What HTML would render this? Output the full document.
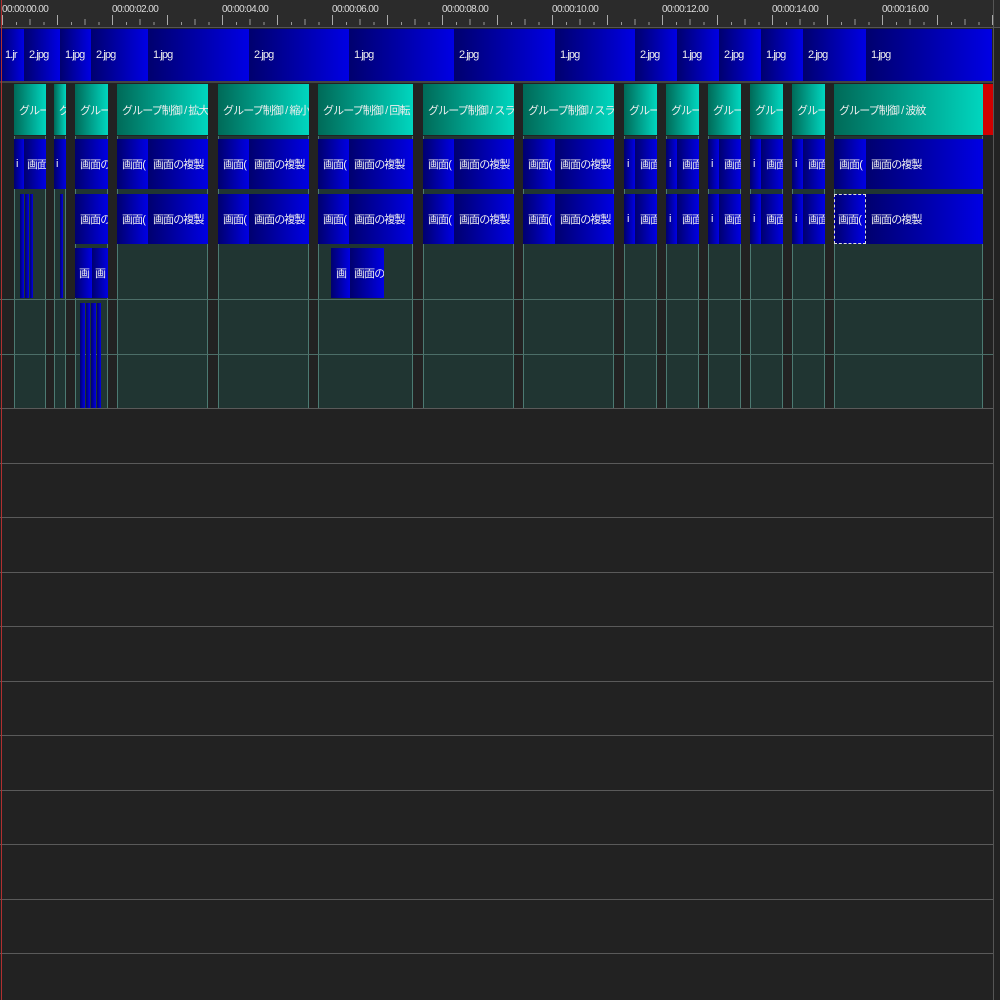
<!DOCTYPE html>
<html><head><meta charset="utf-8"><style>
*{margin:0;padding:0;box-sizing:border-box}
body{width:1000px;height:1000px;background:#222;position:relative;overflow:hidden;font-family:"Liberation Sans","Noto Sans CJK JP",sans-serif;color:#eee;font-size:11px}
div{position:absolute}
.ruler{left:0;top:0;width:1000px;height:28px;background:#2b2b2b;border-bottom:1px solid #555}
.lb{top:4px;font-size:10px;color:#ddd;letter-spacing:-0.6px}
.b{background:linear-gradient(90deg,#00006e,#0000e4);white-space:nowrap;overflow:hidden;display:flex;align-items:center;padding-left:5px;letter-spacing:-0.9px}
.g{top:84px;height:51px;background:linear-gradient(90deg,#006a58,#00d6bf);display:flex;align-items:center;padding-left:5px;overflow:hidden;white-space:nowrap;letter-spacing:-0.9px}
.t{top:136px;height:272px;background:#203532;border-left:1px solid #4c7a72;border-right:1px solid #4c7a72}
.hl{left:0;width:993px;height:1px;background:#5a5a5a}
.r3{top:139px;height:50px}
.r4{top:194px;height:50px}
.s{background:linear-gradient(90deg,#00006e,#0000e4)}
</style></head><body>
<div class="ruler">
<div class="lb" style="left:2px">00:00:00.00</div>
<div class="lb" style="left:112px">00:00:02.00</div>
<div class="lb" style="left:222px">00:00:04.00</div>
<div class="lb" style="left:332px">00:00:06.00</div>
<div class="lb" style="left:442px">00:00:08.00</div>
<div class="lb" style="left:552px">00:00:10.00</div>
<div class="lb" style="left:662px">00:00:12.00</div>
<div class="lb" style="left:772px">00:00:14.00</div>
<div class="lb" style="left:882px">00:00:16.00</div>
<div style="left:2px;top:22px;width:998px;height:3px;background:repeating-linear-gradient(90deg,#999 0 1px,transparent 1px 13.75px)"></div>
<div style="left:2px;top:19px;width:998px;height:6px;background:repeating-linear-gradient(90deg,#999 0 1px,transparent 1px 27.5px)"></div>
<div style="left:2px;top:15px;width:998px;height:10px;background:repeating-linear-gradient(90deg,#aaa 0 1px,transparent 1px 55px)"></div>
</div>
<!-- row1 images -->
<div class="b" style="left:0;top:29px;width:24px;height:52px">1.jr</div>
<div class="b" style="left:24px;top:29px;width:36px;height:52px">2.jpg</div>
<div class="b" style="left:60px;top:29px;width:31px;height:52px">1.jpg</div>
<div class="b" style="left:91px;top:29px;width:57px;height:52px">2.jpg</div>
<div class="b" style="left:148px;top:29px;width:101px;height:52px">1.jpg</div>
<div class="b" style="left:249px;top:29px;width:100px;height:52px">2.jpg</div>
<div class="b" style="left:349px;top:29px;width:105px;height:52px">1.jpg</div>
<div class="b" style="left:454px;top:29px;width:101px;height:52px">2.jpg</div>
<div class="b" style="left:555px;top:29px;width:80px;height:52px">1.jpg</div>
<div class="b" style="left:635px;top:29px;width:42px;height:52px">2.jpg</div>
<div class="b" style="left:677px;top:29px;width:42px;height:52px">1.jpg</div>
<div class="b" style="left:719px;top:29px;width:42px;height:52px">2.jpg</div>
<div class="b" style="left:761px;top:29px;width:42px;height:52px">1.jpg</div>
<div class="b" style="left:803px;top:29px;width:63px;height:52px">2.jpg</div>
<div class="b" style="left:866px;top:29px;width:126px;height:52px">1.jpg</div>
<div style="left:0;top:81px;width:993px;height:2px;background:#444"></div>
<!-- teal backgrounds -->
<div class="t" style="left:14px;width:32px"></div>
<div class="t" style="left:54px;width:12px"></div>
<div class="t" style="left:75px;width:33px"></div>
<div class="t" style="left:117px;width:91px"></div>
<div class="t" style="left:218px;width:91px"></div>
<div class="t" style="left:318px;width:95px"></div>
<div class="t" style="left:423px;width:91px"></div>
<div class="t" style="left:523px;width:91px"></div>
<div class="t" style="left:624px;width:33px"></div>
<div class="t" style="left:666px;width:33px"></div>
<div class="t" style="left:708px;width:33px"></div>
<div class="t" style="left:750px;width:33px"></div>
<div class="t" style="left:792px;width:33px"></div>
<div class="t" style="left:834px;width:149px"></div>
<div style="left:0;top:299px;width:993px;height:1px;background:#4c6e68"></div>
<div style="left:0;top:354px;width:993px;height:1px;background:#4c6e68"></div>
<!-- group row -->
<div class="g" style="left:14px;width:32px">グルー</div>
<div class="g" style="left:54px;width:12px">グ</div>
<div class="g" style="left:75px;width:33px">グルー</div>
<div class="g" style="left:117px;width:91px">グループ制御 / 拡大</div>
<div class="g" style="left:218px;width:91px">グループ制御 / 縮小</div>
<div class="g" style="left:318px;width:95px">グループ制御 / 回転</div>
<div class="g" style="left:423px;width:91px">グループ制御 / スライド</div>
<div class="g" style="left:523px;width:91px">グループ制御 / スライド</div>
<div class="g" style="left:624px;width:33px">グルー</div>
<div class="g" style="left:666px;width:33px">グルー</div>
<div class="g" style="left:708px;width:33px">グルー</div>
<div class="g" style="left:750px;width:33px">グルー</div>
<div class="g" style="left:792px;width:33px">グルー</div>
<div class="g" style="left:834px;width:149px">グループ制御 / 波紋</div>
<div style="left:983px;top:84px;width:10px;height:51px;background:#d00000"></div>
<!-- row3 -->
<div class="b r3" style="left:14px;width:10px;padding-left:2px">i</div><div class="b r3" style="left:24px;width:22px;padding-left:3px">画面</div>
<div class="b r3" style="left:54px;width:12px;padding-left:2px">i</div>
<div class="b r3" style="left:75px;width:33px">画面の</div>
<div class="b r3" style="left:117px;width:31px">画面(</div><div class="b r3" style="left:148px;width:60px">画面の複製</div>
<div class="b r3" style="left:218px;width:31px">画面(</div><div class="b r3" style="left:249px;width:60px">画面の複製</div>
<div class="b r3" style="left:318px;width:31px">画面(</div><div class="b r3" style="left:349px;width:64px">画面の複製</div>
<div class="b r3" style="left:423px;width:31px">画面(</div><div class="b r3" style="left:454px;width:60px">画面の複製</div>
<div class="b r3" style="left:523px;width:32px">画面(</div><div class="b r3" style="left:555px;width:59px">画面の複製</div>
<div class="b r3" style="left:624px;width:11px;padding-left:3px">i</div><div class="b r3" style="left:635px;width:22px">画面</div>
<div class="b r3" style="left:666px;width:11px;padding-left:3px">i</div><div class="b r3" style="left:677px;width:22px">画面</div>
<div class="b r3" style="left:708px;width:11px;padding-left:3px">i</div><div class="b r3" style="left:719px;width:22px">画面</div>
<div class="b r3" style="left:750px;width:11px;padding-left:3px">i</div><div class="b r3" style="left:761px;width:22px">画面</div>
<div class="b r3" style="left:792px;width:11px;padding-left:3px">i</div><div class="b r3" style="left:803px;width:22px">画面</div>
<div class="b r3" style="left:834px;width:32px">画面(</div><div class="b r3" style="left:866px;width:117px">画面の複製</div>
<!-- row4 -->
<div class="b r4" style="left:75px;width:33px">画面の</div>
<div class="b r4" style="left:117px;width:31px">画面(</div><div class="b r4" style="left:148px;width:60px">画面の複製</div>
<div class="b r4" style="left:218px;width:31px">画面(</div><div class="b r4" style="left:249px;width:60px">画面の複製</div>
<div class="b r4" style="left:318px;width:31px">画面(</div><div class="b r4" style="left:349px;width:64px">画面の複製</div>
<div class="b r4" style="left:423px;width:31px">画面(</div><div class="b r4" style="left:454px;width:60px">画面の複製</div>
<div class="b r4" style="left:523px;width:32px">画面(</div><div class="b r4" style="left:555px;width:59px">画面の複製</div>
<div class="b r4" style="left:624px;width:11px;padding-left:3px">i</div><div class="b r4" style="left:635px;width:22px">画面</div>
<div class="b r4" style="left:666px;width:11px;padding-left:3px">i</div><div class="b r4" style="left:677px;width:22px">画面</div>
<div class="b r4" style="left:708px;width:11px;padding-left:3px">i</div><div class="b r4" style="left:719px;width:22px">画面</div>
<div class="b r4" style="left:750px;width:11px;padding-left:3px">i</div><div class="b r4" style="left:761px;width:22px">画面</div>
<div class="b r4" style="left:792px;width:11px;padding-left:3px">i</div><div class="b r4" style="left:803px;width:22px">画面</div>
<div class="b r4" style="left:834px;width:32px;border:1px dashed #ddd;padding-left:3px">画面(</div><div class="b r4" style="left:866px;width:117px">画面の複製</div>
<!-- thin stripes -->
<div class="s" style="left:20px;top:194px;width:4px;height:104px"></div>
<div class="s" style="left:25px;top:194px;width:4px;height:104px"></div>
<div class="s" style="left:30px;top:194px;width:3px;height:104px"></div>
<div class="s" style="left:60px;top:194px;width:3px;height:104px"></div>
<!-- row5 -->
<div class="b" style="left:75px;top:248px;width:17px;height:50px;padding-left:4px">画</div>
<div class="b" style="left:92px;top:248px;width:16px;height:50px;padding-left:3px">画</div>
<div class="b" style="left:331px;top:248px;width:19px;height:50px;padding-left:5px">画</div>
<div class="b" style="left:350px;top:248px;width:34px;height:50px;padding-left:4px">画面の</div>
<div class="s" style="left:80px;top:303px;width:5px;height:105px"></div>
<div class="s" style="left:86px;top:303px;width:4px;height:105px"></div>
<div class="s" style="left:91px;top:303px;width:5px;height:105px"></div>
<div class="s" style="left:97px;top:303px;width:4px;height:105px"></div>
<!-- lower rows -->
<div class="hl" style="top:408px"></div>
<div class="hl" style="top:463px"></div>
<div class="hl" style="top:517px"></div>
<div class="hl" style="top:572px"></div>
<div class="hl" style="top:626px"></div>
<div class="hl" style="top:681px"></div>
<div class="hl" style="top:735px"></div>
<div class="hl" style="top:790px"></div>
<div class="hl" style="top:844px"></div>
<div class="hl" style="top:899px"></div>
<div class="hl" style="top:953px"></div>
<div style="left:993px;top:0;width:1px;height:1000px;background:#555"></div>
<div style="left:1px;top:0;width:1px;height:1000px;background:#b03030"></div>
</body></html>
